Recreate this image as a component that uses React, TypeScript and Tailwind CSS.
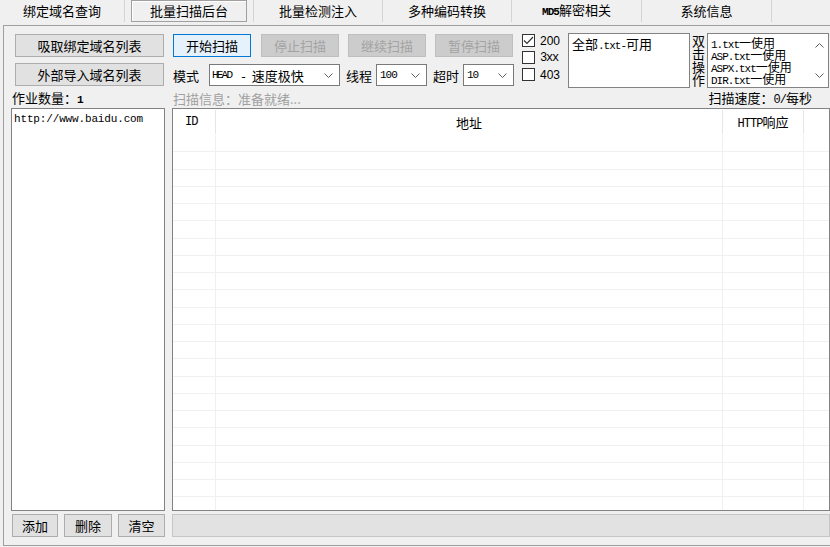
import React from 'react'

const M = ({ children, className = '' }: { children: React.ReactNode; className?: string }) => (
  <span className={`font-['Liberation_Mono',monospace] ${className}`}>{children}</span>
)

const Chevron = ({ up = false }: { up?: boolean }) => (
  <svg width="9" height="5" viewBox="0 0 9 5">
    <path d={up ? 'M0.5 4.5 L4.5 0.5 L8.5 4.5' : 'M0.5 0.5 L4.5 4.5 L8.5 0.5'} fill="none" stroke="#606060" strokeWidth="1" />
  </svg>
)

const Check = ({ checked = false }: { checked?: boolean }) => (
  <div className="w-[13px] h-[13px] border border-[#333] bg-white flex items-center justify-center">
    {checked && (
      <svg width="11" height="9" viewBox="0 0 11 9">
        <path d="M1 4.5 L4 7.5 L10 1" fill="none" stroke="#333" strokeWidth="1.2" />
      </svg>
    )}
  </div>
)

const tabs: { label: React.ReactNode; w: string }[] = [
  { label: '绑定域名查询', w: 'w-[125px]' },
  { label: '批量扫描后台', w: 'w-[129px]' },
  { label: '批量检测注入', w: 'w-[129px]' },
  { label: '多种编码转换', w: 'w-[129px]' },
  { label: <span><M className="text-[11px] tracking-[-1px] font-bold">MD5</M>解密相关</span>, w: 'w-[130px]' },
  { label: '系统信息', w: 'w-[130px]' },
]

const btn = 'h-[23px] flex items-center justify-center border text-[13px] leading-none'
const normal = 'bg-[#e1e1e1] border-[#adadad] text-black'
const disabled = 'bg-[#cccccc] border-[#bfbfbf] text-[#a3a3a3]'

const listItems = ['1.txt', 'ASP.txt', 'ASPX.txt', 'DIR.txt']

export default function App() {
  return (
    <div className="w-[830px] h-[547px] overflow-hidden bg-[#f0f0f0] text-black font-['Noto_Sans_CJK_SC','Liberation_Sans',sans-serif] select-none">
      {/* 顶部标签 */}
      <div className="h-[25px] flex">
        {tabs.map((t, i) => (
          <div key={i} className={`${t.w} h-[22px] border-r border-[#d4d4d4] flex items-center justify-center text-[13px] leading-none pb-[1px]`}>
            {i === 1 ? (
              <div className="mx-[6px] w-full h-[22px] border border-[#a0a0a0] shadow-[inset_1px_1px_0_#ffffff] flex items-center justify-center">
                {t.label}
              </div>
            ) : (
              t.label
            )}
          </div>
        ))}
      </div>

      {/* 主面板 */}
      <div className="ml-[3px] h-[521px] border-l border-t border-b border-[#a0a0a0] pl-[7px] pt-[7px] flex flex-col">
        {/* 控制区 */}
        <div className="h-[55px] flex">
          <div className="w-[154px] pl-[4px] pt-[1px] flex flex-col gap-[6px]">
            <div className={`${btn} ${normal} w-[149px]`}>吸取绑定域名列表</div>
            <div className={`${btn} ${normal} w-[149px]`}>外部导入域名列表</div>
          </div>

          <div className="ml-[7px] w-[342px] pl-[1px] pt-[1px] flex flex-col gap-[7px]">
            <div className="flex">
              <div className={`${btn} w-[78px] bg-[#e5f1fb] border-[#0078d7]`}>开始扫描</div>
              <div className={`${btn} ${disabled} w-[78px] ml-[10px]`}>停止扫描</div>
              <div className={`${btn} ${disabled} w-[78px] ml-[9px]`}>继续扫描</div>
              <div className={`${btn} ${disabled} w-[78px] ml-[9px]`}>暂停扫描</div>
            </div>
            <div className="flex items-center h-[22px] text-[13px] leading-none">
              <span className="w-[36px]">模式</span>
              <div className="w-[131px] h-[22px] border border-[#7a7a7a] bg-white flex items-center pl-[2px] pr-[6px]">
                <M className="text-[11px] tracking-[-1.8px]">HEAD</M>
                <span className="ml-[10px]">-</span>
                <span className="ml-[6px]">速度极快</span>
                <span className="ml-auto"><Chevron /></span>
              </div>
              <span className="ml-[6px] w-[30px]">线程</span>
              <div className="w-[51px] h-[22px] border border-[#7a7a7a] bg-white flex items-center pl-[3px] pr-[6px]">
                <M className="text-[11px] tracking-[-1px]">100</M>
                <span className="ml-auto"><Chevron /></span>
              </div>
              <span className="ml-[6px] w-[30px]">超时</span>
              <div className="w-[51px] h-[22px] border border-[#7a7a7a] bg-white flex items-center pl-[3px] pr-[6px]">
                <M className="text-[11px] tracking-[-1px]">10</M>
                <span className="ml-auto"><Chevron /></span>
              </div>
            </div>
          </div>

          <div className="ml-[8px] w-[46px] pt-[1px] flex flex-col gap-[4px] text-[12px] leading-none">
            <div className="flex items-center gap-[5px]"><Check checked /><span className="font-['Liberation_Sans',sans-serif]">200</span></div>
            <div className="flex items-center gap-[5px]"><Check /><M className="text-[12px] tracking-[-1.2px]">3xx</M></div>
            <div className="flex items-center gap-[5px]"><Check /><span className="font-['Liberation_Sans',sans-serif]">403</span></div>
          </div>

          <div className="w-[122px] h-[55px] border border-[#828282] bg-white px-[3px] pt-[2px] text-[13px] leading-[15px]">
            全部<M className="text-[11px] tracking-[-1px]">.txt-</M>可用
          </div>

          <div className="w-[17px] flex flex-col items-center pt-[1px] text-[13px] leading-[13px]">
            <div className="h-[13px]">双</div>
            <div className="h-[13px]">击</div>
            <div className="h-[13px]">操</div>
            <div className="h-[13px]">作</div>
          </div>

          <div className="w-[122px] h-[55px] border border-[#828282] bg-white flex">
            <div className="flex-1 pl-[3px] pt-[3px] text-[12px] overflow-hidden">
              {listItems.map((f) => (
                <div key={f} className="h-[12px] leading-[12px] whitespace-nowrap">
                  <M className="text-[11px] leading-[12px] tracking-[-1px]">{f}</M>一使用
                </div>
              ))}
            </div>
            <div className="w-[17px] flex flex-col items-center justify-between py-[9px]">
              <Chevron up />
              <Chevron />
            </div>
          </div>
        </div>

        {/* 信息行 */}
        <div className="h-[20px] flex items-center text-[13px] leading-none">
          <div className="w-[154px] pl-[1px]">作业数量：<M className="text-[11px] font-bold">1</M></div>
          <div className="ml-[8px] text-[#a0a0a0]">扫描信息：准备就绪...</div>
          <div className="ml-auto mr-[18px]">扫描速度：<M className="text-[12px] tracking-[-1px]">0/</M>每秒</div>
        </div>

        {/* 列表与表格 */}
        <div className="h-[403px] flex">
          <div className="w-[154px] border border-[#828282] bg-white pl-[2px] pt-[1px] text-[11px] leading-[14px]">
            <M className="text-[11px] tracking-[-0.15px]">http://www.baidu.com</M>
          </div>
          <div className="ml-[7px] flex-1 border border-[#828282] bg-white overflow-hidden flex flex-col">
            <div className="h-[26px] shrink-0 flex text-[13px] leading-none">
              <div className="w-[43px] border-r border-[#e5e5e5] my-[1px] flex items-center pl-[12px]">
                <M className="text-[12px] tracking-[-1px]">ID</M>
              </div>
              <div className="w-[507px] border-r border-[#e5e5e5] my-[1px] flex items-center justify-center">地址</div>
              <div className="w-[81px] border-r border-[#e5e5e5] my-[1px] flex items-center justify-center">
                <span><M className="text-[12px] tracking-[-1px]">HTTP</M>响应</span>
              </div>
              <div className="flex-1" />
            </div>
            {Array.from({ length: 22 }).map((_, i) => (
              <div key={i} className="h-[17.25px] shrink-0 flex border-b border-[#f0f0f0]">
                <div className="w-[43px] border-r border-[#f0f0f0]" />
                <div className="w-[507px] border-r border-[#f0f0f0]" />
                <div className="w-[81px] border-r border-[#f0f0f0]" />
                <div className="flex-1" />
              </div>
            ))}
          </div>
        </div>

        {/* 底部按钮 */}
        <div className="mt-[3px] h-[23px] flex">
          <div className="w-[154px] pl-[1px] flex gap-[6px]">
            <div className={`${btn} ${normal} w-[46px]`}>添加</div>
            <div className={`${btn} ${normal} w-[48px]`}>删除</div>
            <div className={`${btn} ${normal} w-[47px]`}>清空</div>
          </div>
          <div className="ml-[7px] flex-1 h-[23px] bg-[#e2e2e2] border border-[#c6c6c6]" />
        </div>
      </div>
    </div>
  )
}
